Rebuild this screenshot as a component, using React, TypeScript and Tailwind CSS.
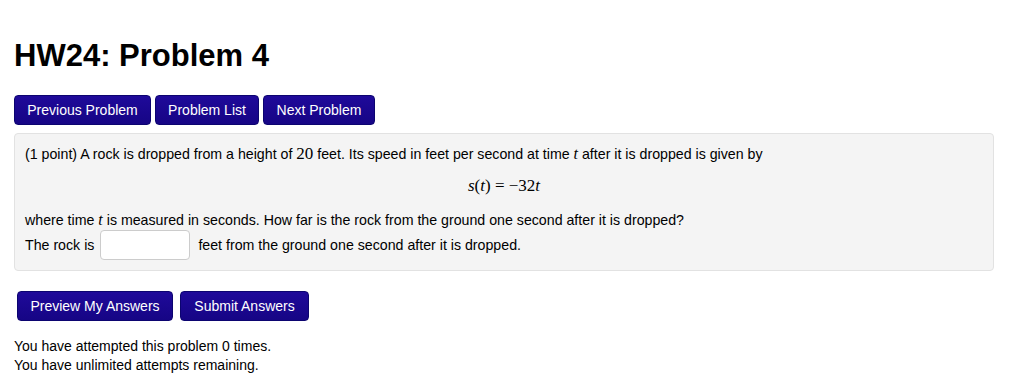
import React from "react";

const btn =
  "h-[30px] px-[10px] rounded-[4px] border border-[#0c0470] bg-gradient-to-b from-[#1f0a9a] to-[#160585] text-white text-[14px] leading-none";

export default function App() {
  return (
    <main className="min-h-screen bg-white text-black px-[14px] pt-[38px] font-['Liberation_Sans',Arial,sans-serif]">
      <h1 className="text-[31px] font-bold leading-[36px]">HW24: Problem 4</h1>

      <div className="mt-[21px] flex gap-[4px]">
        <button className={btn + " w-[137px]"}>Previous Problem</button>
        <button className={btn + " w-[104px]"}>Problem List</button>
        <button className={btn + " w-[112px]"}>Next Problem</button>
      </div>

      <div className="mt-[8px] w-[980px] h-[138px] rounded-[4px] border border-[#e2e2e2] bg-[#f4f4f4] px-[10px] pt-[11px] text-[14.2px] leading-[18px]">
        <p>
          (1 point) A rock is dropped from a height of{" "}
          <span className="font-['Liberation_Serif',serif] text-[17px]">20</span> feet. Its speed in feet per second at
          time <i className="font-['Liberation_Serif',serif] text-[16px]">t</i> after it is dropped is given by
        </p>
        <div className="mt-[13px] text-center font-['Liberation_Serif',serif] text-[17px] leading-[20px]">
          <i>s</i>(<i>t</i>) = −32<i>t</i>
        </div>
        <p className="mt-[15px]">
          where time <i className="font-['Liberation_Serif',serif] text-[16px]">t</i> is measured in seconds. How far is
          the rock from the ground one second after it is dropped?
        </p>
        <div className="mt-[1px] flex items-center">
          <span>The rock is</span>
          <input
            type="text"
            className="ml-[6px] mr-[8px] w-[90px] h-[30px] rounded-[4px] border border-[#cccccc] bg-white outline-none"
          />
          <span>feet from the ground one second after it is dropped.</span>
        </div>
      </div>

      <div className="mt-[20px] ml-[3px] flex gap-[7px]">
        <button className={btn + " w-[156px]"}>Preview My Answers</button>
        <button className={btn + " w-[129px]"}>Submit Answers</button>
      </div>

      <div className="mt-[16px] text-[14px] leading-[19px]">
        <div>You have attempted this problem 0 times.</div>
        <div>You have unlimited attempts remaining.</div>
      </div>
    </main>
  );
}
